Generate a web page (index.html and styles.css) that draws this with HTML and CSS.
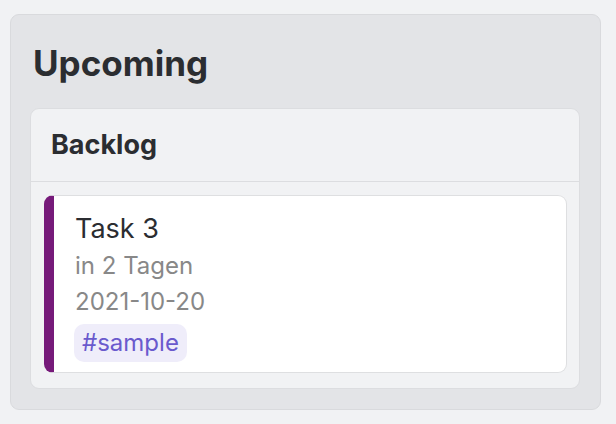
FILE: index.html
```html
<!DOCTYPE html>
<html lang="de">
<head>
<meta charset="utf-8">
<title>Upcoming</title>
<link rel="stylesheet" href="styles.css">
</head>
<body>
<section class="board">
  <h1 class="board-title">Upcoming</h1>
  <div class="column">
    <div class="column-header">Backlog</div>
    <div class="column-body">
      <article class="card">
        <div class="card-title">Task 3</div>
        <div class="card-meta">in 2 Tagen</div>
        <div class="card-meta">2021-10-20</div>
        <span class="tag">#sample</span>
      </article>
    </div>
  </div>
</section>
</body>
</html>
```
FILE: styles.css
```css
html, body {
  margin: 0;
  padding: 0;
  background: #f1f2f4;
}
body {
  padding: 14px 16px 0 10px;
  font-family: Inter, "Noto Sans", sans-serif;
  color: #2b2d31;
}
.board {
  width: 550px;
  background: #e3e4e7;
  border: 1px solid #d9dadd;
  border-radius: 9px;
  padding: 26px 20px 20px 19px;
}
.board-title {
  margin: 0 0 23px 3px;
  font-size: 35px;
  line-height: 44px;
  font-weight: 700;
  color: #2b2d31;
}
.column {
  background: #f1f2f4;
  border: 1px solid #dcdde0;
  border-radius: 9px;
}
.column-header {
  padding: 20px 20px 20px 20px;
  font-size: 27px;
  line-height: 32px;
  font-weight: 700;
  border-bottom: 1px solid #dcdde0;
}
.column-body {
  padding: 13px 12px 15px 13px;
}
.card {
  background: #ffffff;
  border: 1px solid #dedfe1;
  border-left: 10px solid #761a7a;
  border-radius: 9px;
  padding: 17px 20px 10px 21px;
}
.card-title {
  font-size: 27px;
  line-height: 32px;
  margin-bottom: 3px;
  color: #2b2d31;
}
.card-meta {
  font-size: 24px;
  line-height: 36px;
  color: #888888;
}
.tag {
  display: inline-block;
  margin: 4px 0 0 -1px;
  padding: 0 8px;
  font-size: 24px;
  line-height: 38px;
  color: #6a5acd;
  background: #efedfa;
  border-radius: 10px;
}
```
